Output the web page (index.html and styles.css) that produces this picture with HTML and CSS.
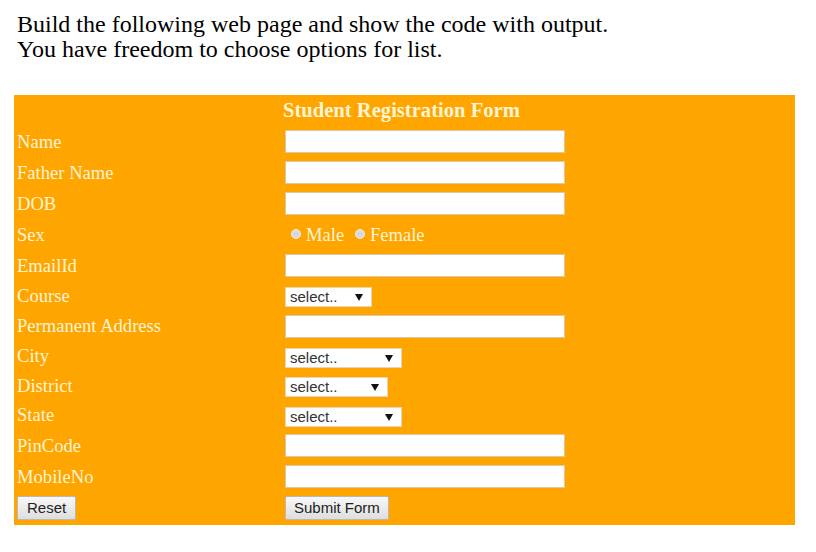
FILE: index.html
```html
<!DOCTYPE html>
<html lang="en">
<head>
    <meta charset="UTF-8">
    <title>Student Registration Form</title>
    <link rel="stylesheet" href="styles.css">
</head>
<body>
    <div class="task">
        <p>Build the following web page and show the code with output.</p>
        <p>You have freedom to choose options for list.</p>
    </div>

    <!-- registration form -->
    <form class="reg-form">
        <table class="reg-table">
            <tr class="title-row">
                <td class="label-col"></td>
                <td class="title">Student Registration Form</td>
            </tr>
            <tr class="row-input">
                <td>Name</td>
                <td><input type="text" class="text-box"></td>
            </tr>
            <tr class="row-input">
                <td>Father Name</td>
                <td><input type="text" class="text-box"></td>
            </tr>
            <tr class="row-input">
                <td>DOB</td>
                <td><input type="text" class="text-box"></td>
            </tr>
            <tr class="row-input">
                <td>Sex</td>
                <td class="radios">
                    <input type="radio" name="sex" id="male"><label for="male">Male</label>
                    <input type="radio" name="sex" id="female"><label for="female">Female</label>
                </td>
            </tr>
            <tr class="row-input">
                <td>EmailId</td>
                <td><input type="text" class="text-box"></td>
            </tr>
            <tr class="row-select">
                <td>Course</td>
                <td>
                    <span class="select-wrap">
                        <select class="drop course">
                            <option>select..</option>
                            <option>BCA</option>
                            <option>BBA</option>
                            <option>B.Tech</option>
                        </select>
                    </span>
                </td>
            </tr>
            <tr class="row-input">
                <td>Permanent Address</td>
                <td><input type="text" class="text-box"></td>
            </tr>
            <tr class="row-select">
                <td>City</td>
                <td>
                    <span class="select-wrap">
                        <select class="drop city">
                            <option>select..</option>
                            <option>Delhi</option>
                            <option>Mumbai</option>
                            <option>Kolkata</option>
                        </select>
                    </span>
                </td>
            </tr>
            <tr class="row-select">
                <td>District</td>
                <td>
                    <span class="select-wrap">
                        <select class="drop district">
                            <option>select..</option>
                            <option>North</option>
                            <option>South</option>
                        </select>
                    </span>
                </td>
            </tr>
            <tr class="row-select">
                <td>State</td>
                <td>
                    <span class="select-wrap">
                        <select class="drop state">
                            <option>select..</option>
                            <option>Punjab</option>
                            <option>Haryana</option>
                            <option>Gujarat</option>
                        </select>
                    </span>
                </td>
            </tr>
            <tr class="row-input">
                <td>PinCode</td>
                <td><input type="text" class="text-box"></td>
            </tr>
            <tr class="row-input">
                <td>MobileNo</td>
                <td><input type="text" class="text-box"></td>
            </tr>
            <tr class="row-buttons">
                <td><input type="reset" value="Reset" class="btn"></td>
                <td><input type="submit" value="Submit Form" class="btn"></td>
            </tr>
        </table>
    </form>
</body>
</html>
```

FILE: styles.css
```css
body {
    margin: 0;
    padding: 12px 0 0 14px;
    font-family: "Liberation Serif", "Times New Roman", serif;
    background: white;
    color: black;
}

.task {
    padding-left: 3px;
    height: 83px;
}

.task p {
    margin: 0;
    font-size: 24px;
    line-height: 25px;
}

.reg-table {
    width: 781px;
    border-collapse: collapse;
    background: #ffa500;
    color: #fff4d4;
    font-size: 18.6px;
}

.reg-table td {
    padding: 0 0 0 3px;
    vertical-align: middle;
}

.label-col {
    width: 265px;
}

.title-row {
    height: 31px;
}

.title {
    font-weight: bold;
    font-size: 20.6px;
    padding-left: 1px !important;
}

.row-input {
    height: 31px;
}

.row-select {
    height: 29.5px;
}

.row-buttons {
    height: 33px;
}

.text-box {
    display: block;
    width: 280px;
    height: 23px;
    box-sizing: border-box;
    border: 1px solid #dcc9a2;
    background: white;
    margin: 0;
    padding: 0 3px;
}

/* radio buttons drawn as flat grey dots */
.radios {
    padding-left: 9px !important;
}

.radios input[type="radio"] {
    appearance: none;
    width: 10px;
    height: 10px;
    margin: 0 5px 0 0;
    border-radius: 50%;
    background: #d9d9d9;
    border: 1px solid #eee;
    vertical-align: 2px;
}

.radios label {
    margin-right: 6px;
}

.select-wrap {
    position: relative;
    display: inline-block;
    vertical-align: middle;
}

.select-wrap::after {
    content: "";
    position: absolute;
    right: 9px;
    top: 7px;
    border-left: 4px solid transparent;
    border-right: 4px solid transparent;
    border-top: 7px solid #111;
    pointer-events: none;
}

.drop {
    display: block;
    appearance: none;
    height: 20px;
    margin: 0;
    padding: 0 0 0 4px;
    border: 1px solid #e6d6b4;
    border-radius: 0;
    background: white;
    color: #333;
    font-family: "Liberation Sans", Arial, sans-serif;
    font-size: 15px;
    line-height: 18px;
}

.course { width: 87px; }
.city { width: 117px; }
.district { width: 103px; }
.state { width: 117px; }

.btn {
    display: block;
    height: 24px;
    margin: -2px 0 0;
    padding: 0 8px;
    border: 1px solid #b8b8b8;
    border-radius: 2px;
    background: linear-gradient(#f8f8f8, #dedede);
    color: #222;
    font-family: "Liberation Sans", Arial, sans-serif;
    font-size: 15px;
}

.reg-table td:first-child .btn {
    padding: 0 9px;
}
```
